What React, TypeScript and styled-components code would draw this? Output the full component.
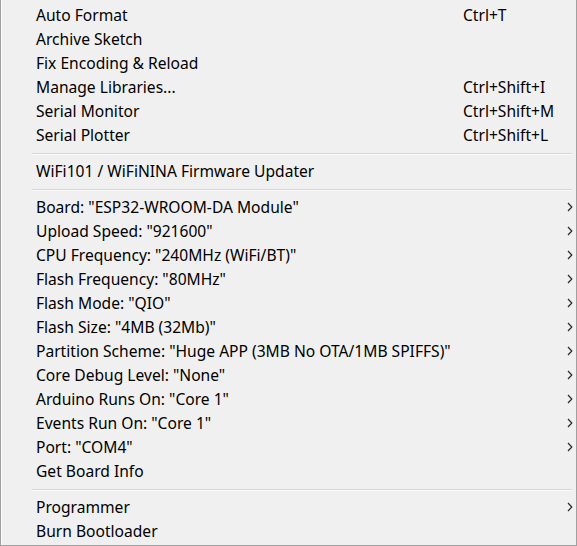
import React from "react";
import styled, { createGlobalStyle } from "styled-components";

const Global = createGlobalStyle`
  html, body { margin: 0; padding: 0; background: #f0f0f0; }
  * { box-sizing: border-box; }
`;

const Menu = styled.div`
  width: 577px;
  height: 546px;
  background: #f0f0f0;
  border-left: 1px solid #a0a0a0;
  border-right: 1px solid #a0a0a0;
  border-bottom: 1px solid #a0a0a0;
  box-shadow: inset 1px 0 0 #ffffff;
  padding-top: 3px;
  font-family: "Noto Sans", "Open Sans", sans-serif;
  font-size: 15.6px;
  color: #000;
  display: flex;
  flex-direction: column;
`;

const Row = styled.div`
  height: 24px;
  display: grid;
  grid-template-columns: 427px 1fr 9px;
  align-items: center;
  padding-left: 35px;
  white-space: nowrap;
`;

const Label = styled.span``;
const Shortcut = styled.span``;

const Arrow = styled.span`
  display: flex;
  align-items: center;
  justify-content: flex-start;
`;

const Separator = styled.div`
  height: 12px;
  display: flex;
  align-items: center;
  padding-left: 31px;
  padding-right: 4px;
  &::after {
    content: "";
    flex: 1;
    height: 1px;
    background: #d7d7d7;
    box-shadow: 0 1px 0 #fbfbfb;
  }
`;

const Chevron = () => (
  <svg width="6" height="10" viewBox="0 0 6 10">
    <path d="M1 1 L4.8 5 L1 9" fill="none" stroke="#2a2a2a" strokeWidth="1.2" />
  </svg>
);

type Item = { label: string; shortcut?: string; sub?: boolean } | "sep";

const items: Item[] = [
  { label: "Auto Format", shortcut: "Ctrl+T" },
  { label: "Archive Sketch" },
  { label: "Fix Encoding & Reload" },
  { label: "Manage Libraries...", shortcut: "Ctrl+Shift+I" },
  { label: "Serial Monitor", shortcut: "Ctrl+Shift+M" },
  { label: "Serial Plotter", shortcut: "Ctrl+Shift+L" },
  "sep",
  { label: "WiFi101 / WiFiNINA Firmware Updater" },
  "sep",
  { label: 'Board: "ESP32-WROOM-DA Module"', sub: true },
  { label: 'Upload Speed: "921600"', sub: true },
  { label: 'CPU Frequency: "240MHz (WiFi/BT)"', sub: true },
  { label: 'Flash Frequency: "80MHz"', sub: true },
  { label: 'Flash Mode: "QIO"', sub: true },
  { label: 'Flash Size: "4MB (32Mb)"', sub: true },
  { label: 'Partition Scheme: "Huge APP (3MB No OTA/1MB SPIFFS)"', sub: true },
  { label: 'Core Debug Level: "None"', sub: true },
  { label: 'Arduino Runs On: "Core 1"', sub: true },
  { label: 'Events Run On: "Core 1"', sub: true },
  { label: 'Port: "COM4"', sub: true },
  { label: "Get Board Info" },
  "sep",
  { label: "Programmer", sub: true },
  { label: "Burn Bootloader" },
];

export default function App() {
  return (
    <>
      <Global />
      <Menu>
        {items.map((it, i) =>
          it === "sep" ? (
            <Separator key={i} />
          ) : (
            <Row key={i}>
              <Label>{it.label}</Label>
              <Shortcut>{it.shortcut ?? ""}</Shortcut>
              <Arrow>{it.sub ? <Chevron /> : null}</Arrow>
            </Row>
          )
        )}
      </Menu>
    </>
  );
}
